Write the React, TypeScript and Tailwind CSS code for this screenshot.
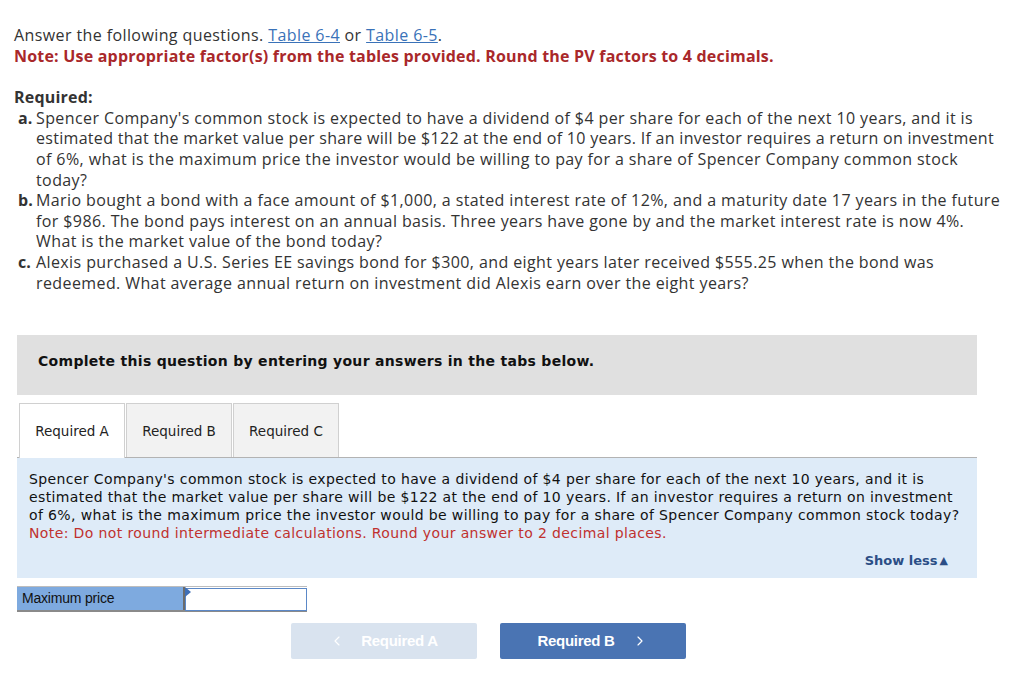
import { useState } from 'react';
import { ChevronLeft, ChevronRight } from 'lucide-react';

const tabs = ['Required A', 'Required B', 'Required C'];

export default function App() {
  const [active, setActive] = useState(0);
  const [price, setPrice] = useState('');

  return (
    <div className="w-[1024px] h-[687px] bg-white overflow-hidden">
      {/* question header */}
      <div className="pl-[14px] pt-[25px] text-[16px] leading-[20.6px] text-[#333] whitespace-nowrap tracking-[0.4px]" style={{ fontFamily: '"Open Sans", Lato, sans-serif' }}>
        <p>
          Answer the following questions.{' '}
          <a href="#" className="text-[#3a72b8] underline">Table 6-4</a> or{' '}
          <a href="#" className="text-[#3a72b8] underline">Table 6-5</a>.
        </p>
        <p className="font-bold text-[#a9282a] tracking-[0.2px]">
          Note: Use appropriate factor(s) from the tables provided. Round the PV factors to 4 decimals.
        </p>
        <p className="font-bold mt-[21px] tracking-[0.2px]">Required:</p>
        <ol className="pl-[4px]">
          <li className="flex">
            <span className="font-bold w-[18px] shrink-0 tracking-normal">a.</span>
            <span>
              Spencer Company's common stock is expected to have a dividend of $4 per share for each of the next 10 years, and it is<br />
              <span className="tracking-[0.3px]">estimated that the market value per share will be $122 at the end of 10 years. If an investor requires a return on investment</span><br />
              of 6%, what is the maximum price the investor would be willing to pay for a share of Spencer Company common stock<br />
              today?
            </span>
          </li>
          <li className="flex">
            <span className="font-bold w-[18px] shrink-0 tracking-normal">b.</span>
            <span>
              Mario bought a bond with a face amount of $1,000, a stated interest rate of 12%, and a maturity date 17 years in the future<br />
              for $986. The bond pays interest on an annual basis. Three years have gone by and the market interest rate is now 4%.<br />
              What is the market value of the bond today?
            </span>
          </li>
          <li className="flex">
            <span className="font-bold w-[18px] shrink-0 tracking-normal">c.</span>
            <span>
              Alexis purchased a U.S. Series EE savings bond for $300, and eight years later received $555.25 when the bond was<br />
              redeemed. What average annual return on investment did Alexis earn over the eight years?
            </span>
          </li>
        </ol>
      </div>

      {/* answer area */}
      <div className="ml-[17px] w-[960px] mt-[42px]" style={{ fontFamily: '"DejaVu Sans", Verdana, sans-serif' }}>
        <div className="h-[60px] bg-[#e0e0e0] pl-[21px] pt-[16px] text-[14px] font-bold text-[#111] tracking-[0.3px]">
          Complete this question by entering your answers in the tabs below.
        </div>

        <div className="mt-[8px] flex pl-[2px] gap-[1px]">
          {tabs.map((t, i) => (
            <button
              key={t}
              onClick={() => setActive(i)}
              className={`w-[106px] text-[13.5px] text-[#222] border border-b-0 border-[#d0d0d0] ${i === active ? 'h-[55px] bg-white relative z-10' : 'h-[54px] bg-[#f2f2f2] self-start'}`}
            >
              {t}
            </button>
          ))}
        </div>

        <div className="-mt-[1px] border-t border-[#b3b3b3] bg-[#deebf8] h-[121px] px-[12px] pt-[12px] text-[14px] leading-[18px] text-[#111] whitespace-nowrap tracking-[0.38px]">
          <p>
            Spencer Company's common stock is expected to have a dividend of $4 per share for each of the next 10 years, and it is<br />
            estimated that the market value per share will be $122 at the end of 10 years. If an investor requires a return on investment<br />
            of 6%, what is the maximum price the investor would be willing to pay for a share of Spencer Company common stock today?
          </p>
          <p className="text-[#c0312f]">Note: Do not round intermediate calculations. Round your answer to 2 decimal places.</p>
          <div className="flex justify-end mt-[10px] pr-[17px]">
            <button className="text-[13px] font-bold text-[#2b4e86] flex items-center gap-[2px] tracking-normal">
              Show less<span className="text-[11px]">▲</span>
            </button>
          </div>
        </div>

        <div className="mt-[8px] flex w-[290px] h-[26px] border-t border-[#bdbdbd] border-b-2 border-b-[#8a8a8a]" style={{ fontFamily: '"Liberation Sans", Arial, sans-serif' }}>
          <div className="w-[166px] bg-[#7eaadf] text-[14px] text-[#111] pl-[5px] flex items-center tracking-[-0.2px]">Maximum price</div>
          <div className="relative flex-1 border-l-2 border-[#6b6b6b] bg-white">
            <input
              value={price}
              onChange={(e) => setPrice(e.target.value)}
              className="w-full h-full border border-[#5b88c7] outline-none px-1 text-[14px]"
            />
            <span className="absolute left-0 top-0 w-0 h-0 border-t-[5px] border-b-[5px] border-l-[6px] border-t-transparent border-b-transparent border-l-[#3f6fb6]" />
          </div>
        </div>

        <div className="mt-[11px] flex justify-center gap-[23px] w-[942px]" style={{ fontFamily: '"Liberation Sans", Arial, sans-serif' }}>
          <button disabled className="w-[186px] h-[36px] rounded-[2px] bg-[#d9e3ef] text-white font-bold text-[15px] tracking-[-0.3px] flex items-center justify-center gap-[16px]">
            <ChevronLeft size={16} strokeWidth={1.75} />Required A
          </button>
          <button onClick={() => setActive(1)} className="w-[186px] h-[36px] rounded-[2px] bg-[#4a74b3] text-white font-bold text-[15px] tracking-[-0.3px] flex items-center justify-center gap-[17px]">
            Required B<ChevronRight size={16} strokeWidth={1.75} />
          </button>
        </div>
      </div>
    </div>
  );
}
